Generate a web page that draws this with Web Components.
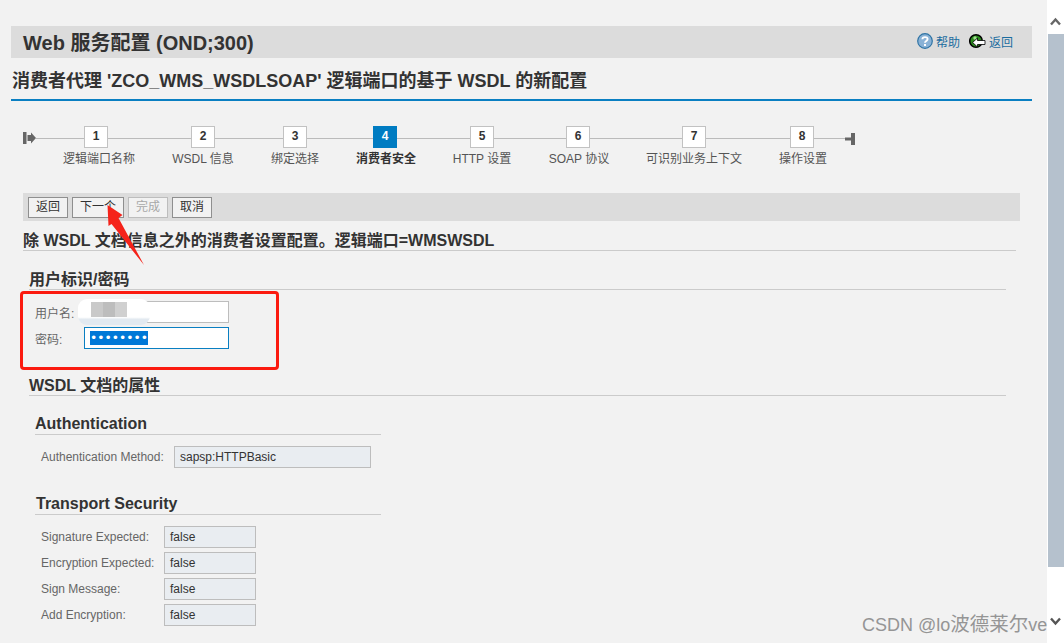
<!DOCTYPE html>
<html lang="zh">
<head>
<meta charset="utf-8">
<title>Web 服务配置</title>
<style>
    html,body{margin:0;height:643px;overflow:hidden;background:#f2f2f2;}
    body{
        position:relative;
        font-family:"Liberation Sans","Noto Sans CJK SC",sans-serif;
        color:#333;
        display:flex;
    }
    main{display:block;width:1047px;flex:none;}
    cfg-page-head{margin:26px 0 0 11px;width:1021px;}
    cfg-sub-title{margin-left:11px;width:1021px;}
    cfg-roadmap{margin:25px 0 0 23px;}
    cfg-toolbar{margin:0 0 0 23px;width:997px;}
    .h-main{margin:0 0 0 23px;width:993px;height:30px;font-size:16px;}
    .h-user{margin:9px 0 0 29px;width:977px;height:30px;font-size:16px;}
    .h-wsdl{margin:0 0 0 29px;width:977px;height:28px;font-size:16px;}
    .h-auth{margin:0 0 0 35px;width:346px;height:28px;font-size:16px;padding-bottom:1px;}
    .h-sec{margin:0 0 0 35px;width:346px;height:28px;font-size:16px;padding:0 0 1px 1px;}
    .form-user{margin:11px 0 0 35px;height:67px;}
    .form-auth{margin:11px 0 0 41px;height:41px;}
    .form-sec{margin:11px 0 0 41px;}
    .sel{
        display:inline-block;vertical-align:middle;margin-top:-2px;
        font-family:"DejaVu Sans",sans-serif;font-size:12.3px;line-height:14px;
    }
</style>
</head>
<body>

<template id="tpl-page-head">
    <style>
        :host{display:flex;height:32px;align-items:center;background:#dcdcdc;padding:0 19px 0 12px;box-sizing:border-box;}
        h1{margin:2px 0 0;flex:1;font-size:20px;line-height:26px;font-weight:bold;color:#333;}
        .lnk{display:flex;align-items:center;gap:3px;color:#1b6d9f;font-size:12px;margin:0 0 2px 9px;}
        svg{display:block;}
    </style>
    <h1><slot></slot></h1>
    <span class="lnk">
        <svg width="16" height="16" viewBox="0 0 16 16">
            <circle cx="8" cy="8" r="7.3" fill="#8ab2d6" stroke="#2f74a5" stroke-width="1.2"/>
            <path d="M5.4 6.2C5.5 3.400 10.6 3.400 10.6 6.1C10.6 8 8 8 8 9.8" fill="none" stroke="#fff" stroke-width="1.9"/>
            <rect x="7" y="11" width="2" height="2" fill="#fff"/>
        </svg>
        帮助
    </span>
    <span class="lnk">
        <svg width="17" height="16" viewBox="0 0 17 16">
            <circle cx="7" cy="8" r="6.300" fill="#2b8a1e" stroke="#000" stroke-width="1.5"/>
            <circle cx="6" cy="5" r="1.700" fill="#9fe08f"/>
            <path d="M3.600 9.500L8.500 5V7.500H16V11.500H8.500V14z" fill="#fff" stroke="#000" stroke-width=".8"/>
        </svg>
        返回
    </span>
</template>

<template id="tpl-sub-title">
    <style>
        :host{display:block;height:43px;border-bottom:2px solid #0a7fc2;box-sizing:border-box;padding-top:11px;}
        div{font-size:18px;line-height:24px;font-weight:bold;color:#333;margin-left:1px;white-space:nowrap;}
    </style>
    <div><slot></slot></div>
</template>

<template id="tpl-roadmap">
    <style>
        :host{display:flex;height:67px;align-items:flex-start;}
        svg{display:block;flex:none;margin-top:6px;}
        .end{width:7px;height:1px;background:#bbb;margin-top:12px;flex:none;}
    </style>
    <svg width="13" height="12" viewBox="0 0 13 12"><path d="M0 0H3.500V12H0zM4.500 3H8V.5L13 6L8 11.500V9H4.500z" fill="#666"/></svg>
    <slot></slot>
    <div class="end"></div>
    <svg width="10" height="12" viewBox="0 0 10 12" style="margin-top:7px"><path d="M0 4.500H6V0H10V12H6V7.500H0z" fill="#666"/></svg>
</template>

<template id="tpl-step">
    <style>
        :host{
            display:block;flex:none;text-align:center;
            background:linear-gradient(#bbb,#bbb) 0 12px/100% 1px no-repeat;
        }
        .num{
            box-sizing:border-box;width:24px;height:22px;margin:0 auto;
            border:1px solid #c2c2c2;background:#fff;
            font-size:12px;font-weight:bold;line-height:19px;color:#333;
        }
        .lab{font-size:12px;line-height:16px;margin-top:3px;padding-left:var(--shift,0);color:#555;white-space:nowrap;}
        :host([active]) .num{background:#007cc2;border-color:#007cc2;color:#fff;}
        :host([active]) .lab{font-weight:bold;color:#333;}
    </style>
    <div class="num"></div>
    <div class="lab"><slot></slot></div>
</template>

<template id="tpl-toolbar">
    <style>
        :host{display:flex;gap:4px;height:28px;padding:4px 5px 3px;box-sizing:border-box;background:#dcdcdc;}
    </style>
    <slot></slot>
</template>

<template id="tpl-btn">
    <style>
        :host{
            display:block;box-sizing:border-box;height:21px;
            border:1px solid #8f8f8f;background:#f2f2f2;color:#333;
            font-size:12px;line-height:19px;text-align:center;
        }
        :host([disabled]){border-color:#bdbdbd;color:#a8a8a8;}
    </style>
    <slot></slot>
</template>

<template id="tpl-heading">
    <style>
        :host{display:flex;align-items:flex-end;box-sizing:border-box;border-bottom:1px solid #cbcbcb;}
        div{font-weight:bold;color:#333;line-height:18px;white-space:nowrap;}
    </style>
    <div><slot></slot></div>
</template>

<template id="tpl-field">
    <style>
        :host{display:flex;align-items:center;height:22px;margin-bottom:4px;font-size:12px;color:#666;}
        .lab{flex:none;width:var(--lab,49px);white-space:nowrap;}
        .box{
            position:relative;flex:none;box-sizing:border-box;height:22px;width:var(--box,145px);
            border:1px solid #bdbdbd;background:#fff;color:#333;
            padding:0 5px;line-height:20px;white-space:nowrap;
        }
        :host([readonly]) .box{background:#e9edf1;}
        :host([focus]) .box{border-color:#0a7fc2;}
        ::slotted(.sel){background:#0078d7;color:#fff;}
    </style>
    <span class="lab"></span>
    <div class="box"><slot></slot></div>
</template>

<template id="tpl-scrollbar">
    <style>
        :host{display:flex;flex-direction:column;width:17px;height:643px;background:#fff;flex:none;}
        .top{height:34px;display:flex;align-items:flex-end;justify-content:center;padding-bottom:8px;box-sizing:border-box;}
        .thumb{height:533px;margin-left:1px;background:#b5c1cd;}
        .bot{padding:50px 0 0 3px;}
        svg{display:block;}
        .top svg{margin-right:1px;}
    </style>
    <div class="top"><svg width="11" height="9" viewBox="0 0 11 9"><path d="M1 7.500L5.500 2.500L10 7.500" fill="none" stroke="#666" stroke-width="2.400"/></svg></div>
    <div class="thumb"></div>
    <div class="bot"><svg width="11" height="9" viewBox="0 0 11 9"><path d="M1 1.500L5.500 6.500L10 1.500" fill="none" stroke="#555" stroke-width="2.400"/></svg></div>
</template>

<template id="tpl-markup">
    <style>
        :host{position:absolute;left:0;top:0;width:1064px;height:643px;display:block;pointer-events:none;}
        .red{position:absolute;left:20px;top:291px;width:253px;height:73px;border:3px solid #fb1a0f;border-radius:4px;}
        svg{position:absolute;left:0;top:0;}
        .blur{position:absolute;left:78px;top:299px;width:72px;height:26px;border-radius:9px;background:linear-gradient(#fff 0,#fff 70%,#e2e9f0 78%,#e2e9f0 100%);filter:blur(.7px);}
        .px{position:absolute;top:302px;height:15px;width:12px;}
        .mark{position:absolute;left:862px;top:612px;font-size:18px;line-height:24px;color:#959595;white-space:nowrap;}
        .mark span{font-size:19.500px;}
    </style>
    <div class="blur"></div>
    <div class="px" style="left:91px;background:#c9c9c9"></div>
    <div class="px" style="left:103px;background:#bdbdbd"></div>
    <div class="px" style="left:115px;background:#d0d0d0"></div>
    <div class="red"></div>
    <svg width="1064" height="643" viewBox="0 0 1064 643"><path d="M107.500 205L122.500 215L118.500 218L144 265L111.500 224L108.500 226z" fill="#f5231a"/></svg>
    <div class="mark">CSDN @lo<span>波德莱尔</span>ve</div>
</template>

<main>
    <cfg-page-head>Web 服务配置 (OND;300)</cfg-page-head>
    <cfg-sub-title>消费者代理 'ZCO_WMS_WSDLSOAP' 逻辑端口的基于 WSDL 的新配置</cfg-sub-title>

    <cfg-roadmap>
        <cfg-step n="1" w="120" style="--shift:6px">逻辑端口名称</cfg-step>
        <cfg-step n="2" w="94">WSDL 信息</cfg-step>
        <cfg-step n="3" w="90">绑定选择</cfg-step>
        <cfg-step n="4" w="90" active style="--shift:2px">消费者安全</cfg-step>
        <cfg-step n="5" w="104">HTTP 设置</cfg-step>
        <cfg-step n="6" w="88" style="--shift:2px">SOAP 协议</cfg-step>
        <cfg-step n="7" w="144">可识别业务上下文</cfg-step>
        <cfg-step n="8" w="72" style="--shift:2px">操作设置</cfg-step>
    </cfg-roadmap>

    <cfg-toolbar>
        <cfg-btn style="width:40px">返回</cfg-btn>
        <cfg-btn style="width:52px">下一个</cfg-btn>
        <cfg-btn style="width:40px" disabled>完成</cfg-btn>
        <cfg-btn style="width:40px">取消</cfg-btn>
    </cfg-toolbar>

    <cfg-heading class="h-main">除 WSDL 文档信息之外的消费者设置配置。逻辑端口=WMSWSDL</cfg-heading>
    <cfg-heading class="h-user">用户标识/密码</cfg-heading>
    <div class="form-user">
        <cfg-field label="用户名:"></cfg-field>
        <cfg-field label="密码:" focus><span class="sel">••••••••</span></cfg-field>
    </div>

    <cfg-heading class="h-wsdl">WSDL 文档的属性</cfg-heading>
    <div style="height:11px"></div>
    <cfg-heading class="h-auth">Authentication</cfg-heading>
    <div class="form-auth" style="--lab:133px;--box:197px">
        <cfg-field label="Authentication Method:" readonly>sapsp:HTTPBasic</cfg-field>
    </div>
    <cfg-heading class="h-sec">Transport Security</cfg-heading>
    <div class="form-sec" style="--lab:123px;--box:92px">
        <cfg-field label="Signature Expected:" readonly>false</cfg-field>
        <cfg-field label="Encryption Expected:" readonly>false</cfg-field>
        <cfg-field label="Sign Message:" readonly>false</cfg-field>
        <cfg-field label="Add Encryption:" readonly>false</cfg-field>
    </div>
</main>
<cfg-scrollbar></cfg-scrollbar>
<cfg-markup></cfg-markup>

<script>
    // every element just clones its own template
    function plain(tag, tplId, init) {
        customElements.define(tag, class extends HTMLElement {
            constructor() {
                super();
                this.attachShadow({ mode: 'open' });
                this.shadowRoot.appendChild(document.getElementById(tplId).content.cloneNode(true));
            }
            connectedCallback() {
                if (init) init.call(this);
            }
        });
    }

    plain('cfg-page-head', 'tpl-page-head');
    plain('cfg-sub-title', 'tpl-sub-title');
    plain('cfg-roadmap', 'tpl-roadmap');
    plain('cfg-step', 'tpl-step', function () {
        this.shadowRoot.querySelector('.num').textContent = this.getAttribute('n');
        this.style.width = this.getAttribute('w') + 'px';
    });
    plain('cfg-toolbar', 'tpl-toolbar');
    plain('cfg-btn', 'tpl-btn');
    plain('cfg-heading', 'tpl-heading');
    plain('cfg-field', 'tpl-field', function () {
        this.shadowRoot.querySelector('.lab').textContent = this.getAttribute('label');
    });
    plain('cfg-scrollbar', 'tpl-scrollbar');
    plain('cfg-markup', 'tpl-markup');
</script>
</body>
</html>
